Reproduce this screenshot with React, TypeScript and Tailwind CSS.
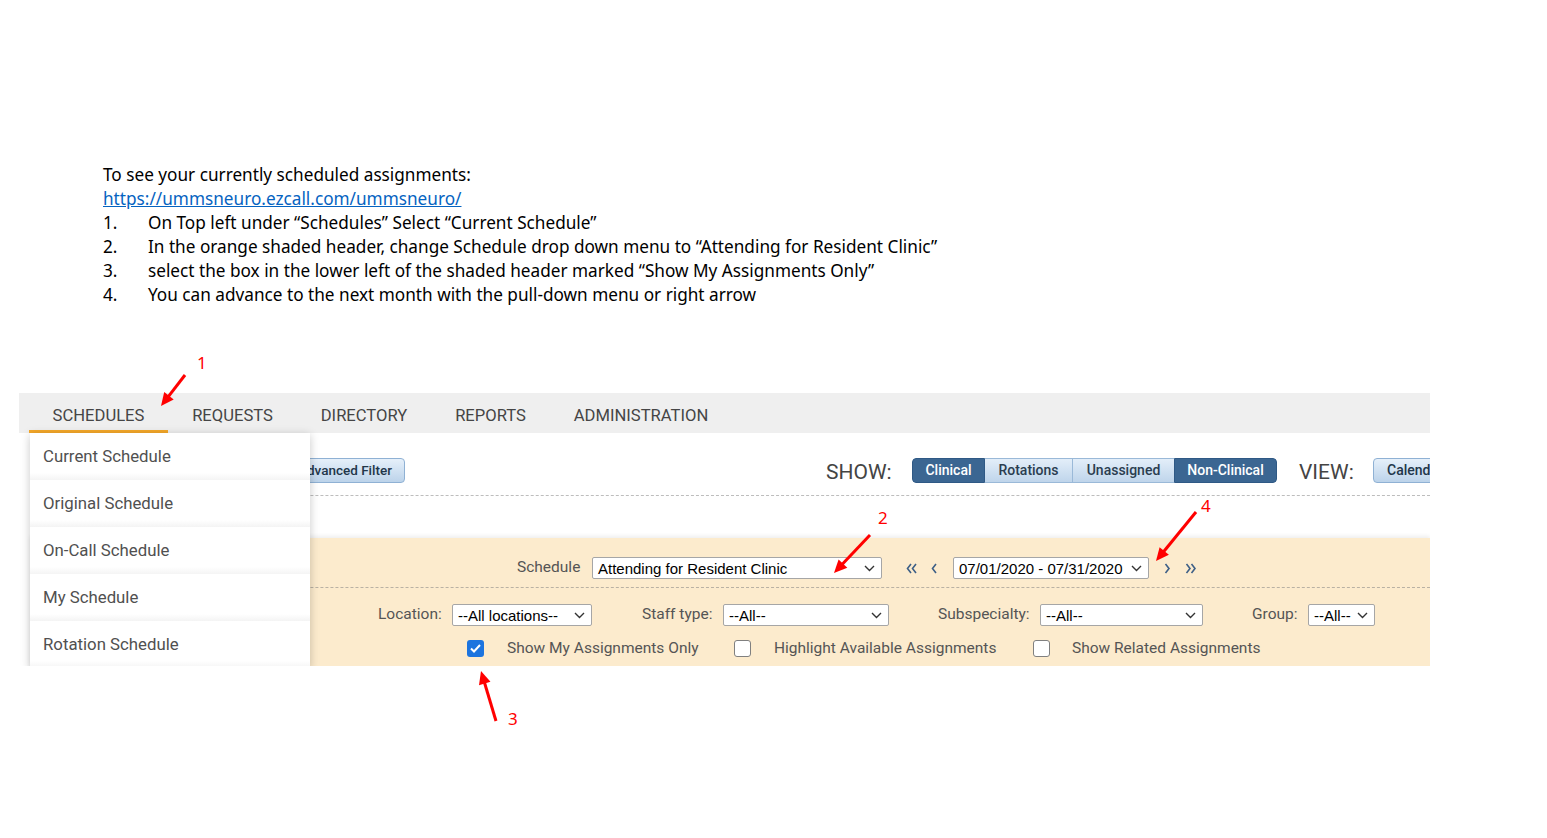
import React from "react";

type Pt = [number, number];

function Arrow({ from, to }: { from: Pt; to: Pt }) {
  const dx = to[0] - from[0];
  const dy = to[1] - from[1];
  const len = Math.hypot(dx, dy);
  const ux = dx / len;
  const uy = dy / len;
  const head = 13;
  const half = 6;
  const bx = to[0] - ux * head;
  const by = to[1] - uy * head;
  const p1 = `${to[0]},${to[1]}`;
  const p2 = `${bx - uy * half},${by + ux * half}`;
  const p3 = `${bx + uy * half},${by - ux * half}`;
  return (
    <g>
      <line x1={from[0]} y1={from[1]} x2={bx + ux * 2} y2={by + uy * 2} stroke="#ff0000" strokeWidth={3} />
      <polygon points={`${p1} ${p2} ${p3}`} fill="#ff0000" />
    </g>
  );
}

function Chevron() {
  return (
    <svg width="11" height="7" viewBox="0 0 11 7">
      <path d="M1 1l4.5 4.5L10 1" fill="none" stroke="#333" strokeWidth="1.4" />
    </svg>
  );
}

// paging chevrons next to the date picker
function Pager({ dir, double = false }: { dir: "l" | "r"; double?: boolean }) {
  const one = dir === "l" ? "M5 1L1.5 5.5L5 10" : "M1.5 1L5 5.5L1.5 10";
  const two = dir === "l" ? "M10 1L6.5 5.5L10 10" : "M6.5 1L10 5.5L6.5 10";
  return (
    <svg width={double ? 11 : 7} height="11" viewBox={`0 0 ${double ? 11 : 7} 11`} className="shrink-0">
      <path d={one} fill="none" stroke="#3d5f86" strokeWidth="1.6" />
      {double && <path d={two} fill="none" stroke="#3d5f86" strokeWidth="1.6" />}
    </svg>
  );
}

function Select({ value, width }: { value: string; width: string }) {
  return (
    <div
      className={`${width} h-[22px] flex items-center justify-between bg-white border border-[#a6a6a6] rounded-[2px] pl-[5px] pr-[6px] font-['Liberation_Sans',Arial,sans-serif] text-[15px] text-black leading-none whitespace-nowrap shrink-0`}
    >
      <span>{value}</span>
      <Chevron />
    </div>
  );
}

function Box({ checked = false }: { checked?: boolean }) {
  return checked ? (
    <div className="w-[17px] h-[17px] rounded-[3px] bg-[#1c74df] flex items-center justify-center shrink-0">
      <svg width="11" height="9" viewBox="0 0 11 9">
        <path d="M1 4.5l3 3L10 1" fill="none" stroke="#fff" strokeWidth="2" />
      </svg>
    </div>
  ) : (
    <div className="w-[17px] h-[17px] rounded-[3px] bg-white border border-[#808080] shrink-0" />
  );
}

const menu = ["Current Schedule", "Original Schedule", "On-Call Schedule", "My Schedule", "Rotation Schedule"];
const tabs: { t: string; w: string }[] = [
  { t: "SCHEDULES", w: "w-[139px]" },
  { t: "REQUESTS", w: "w-[129px]" },
  { t: "DIRECTORY", w: "w-[134px]" },
  { t: "REPORTS", w: "w-[119px]" },
  { t: "ADMINISTRATION", w: "w-[182px]" },
];

export default function App() {
  return (
    <div className="relative w-[1547px] h-[838px] bg-white overflow-hidden">
      {/* instructions */}
      <div className="pt-[163px] pl-[103px] font-['Noto_Sans',sans-serif] text-[17.2px] leading-[24px] text-black">
        <div>To see your currently scheduled assignments:</div>
        <div>
          <span className="text-[#0563c1] underline">https://ummsneuro.ezcall.com/ummsneuro/</span>
        </div>
        {[
          "On Top left under “Schedules” Select “Current Schedule”",
          "In the orange shaded header, change Schedule drop down menu to “Attending for Resident Clinic”",
          "select the box in the lower left of the shaded header marked “Show My Assignments Only”",
          "You can advance to the next month with the pull-down menu or right arrow",
        ].map((t, i) => (
          <div key={i} className="flex">
            <span className="w-[45px] shrink-0">{i + 1}.</span>
            <span>{t}</span>
          </div>
        ))}
      </div>

      {/* app capture */}
      <div className="relative mt-[86px] ml-[19px] w-[1411px] h-[273px] overflow-hidden bg-white font-['Roboto',sans-serif]">
        {/* top nav */}
        <div className="h-[40px] bg-[#efefef] flex pl-[10px]">
          {tabs.map((t, i) => (
            <div
              key={t.t}
              className={`${t.w} shrink-0 flex items-center justify-center pt-[9px] text-[16.6px] text-[#454545] ${
                i === 0 ? "border-b-[3px] border-[#f5a829]" : "border-b-[3px] border-transparent"
              }`}
            >
              {t.t}
            </div>
          ))}
        </div>

        <div className="ml-[11px]">
          {/* toolbar */}
          <div className="h-[63px] border-b border-dashed border-[#bdbdbd] flex items-start pt-[25px]">
            <div className="ml-[252px] w-[123px] h-[25px] pl-[15px] shrink-0 flex items-center rounded-[4px] border border-[#8fb1d4] bg-linear-to-b from-[#e6f0fa] to-[#bcd3ea] text-[13.5px] font-medium text-[#22364a] whitespace-nowrap overflow-hidden">
              Advanced Filter
            </div>
            <div className="ml-[421px] w-[66px] shrink-0 h-[25px] flex items-center text-[21px] text-[#444] leading-none mt-[2px]">SHOW:</div>
            <div className="ml-[20px] flex shrink-0 h-[25px] rounded-[4px] overflow-hidden text-[14px] font-medium">
              <div className="w-[73px] shrink-0 flex items-center justify-center bg-[#3b6692] border border-[#2f5985] text-white rounded-l-[4px]">Clinical</div>
              <div className="w-[88px] shrink-0 flex items-center justify-center bg-linear-to-b from-[#e3eef9] to-[#bfd5eb] border-y border-r border-[#9ab9d8] text-[#2a3d50]">Rotations</div>
              <div className="w-[101px] shrink-0 flex items-center justify-center bg-linear-to-b from-[#e3eef9] to-[#bfd5eb] border-y border-[#9ab9d8] text-[#2a3d50]">Unassigned</div>
              <div className="w-[103px] shrink-0 flex items-center justify-center bg-[#3b6692] border border-[#2f5985] text-white rounded-r-[4px]">Non-Clinical</div>
            </div>
            <div className="ml-[22px] w-[55px] shrink-0 h-[25px] flex items-center text-[21px] text-[#444] leading-none mt-[2px]">VIEW:</div>
            <div className="ml-[19px] h-[25px] w-[100px] shrink-0 pl-[13px] flex items-center rounded-[4px] border border-[#8fb1d4] bg-linear-to-b from-[#e6f0fa] to-[#bcd3ea] text-[14px] font-medium text-[#22364a]">
              Calendar
            </div>
          </div>

          {/* white spacer */}
          <div className="h-[42px]" />

          {/* orange filter panel */}
          <div className="bg-[#fcebcd] shadow-[0_-2px_4px_rgba(0,0,0,0.07)] border-b-[3px] border-[#ececec]">
            <div className="h-[50px] border-b border-dashed border-[#b9b1a3] flex items-start pt-[19px] text-[15.5px] text-[#555]">
              <div className="ml-[487px] w-[63px] shrink-0 h-[22px] flex items-center whitespace-nowrap">Schedule</div>
              <div className="ml-[12px] shrink-0">
                <Select value="Attending for Resident Clinic" width="w-[290px]" />
              </div>
              <div className="ml-[24px] h-[22px] flex items-center">
                <Pager dir="l" double />
              </div>
              <div className="ml-[14px] h-[22px] flex items-center">
                <Pager dir="l" />
              </div>
              <div className="ml-[15px] shrink-0">
                <Select value="07/01/2020 - 07/31/2020" width="w-[196px]" />
              </div>
              <div className="ml-[15px] h-[22px] flex items-center">
                <Pager dir="r" />
              </div>
              <div className="ml-[14px] h-[22px] flex items-center">
                <Pager dir="r" double />
              </div>
            </div>

            <div className="flex items-start pt-[16px] text-[15.5px] text-[#555]">
              <div className="ml-[348px] w-[63px] shrink-0 h-[22px] flex items-center whitespace-nowrap">Location:</div>
              <div className="ml-[11px] shrink-0">
                <Select value="--All locations--" width="w-[140px]" />
              </div>
              <div className="ml-[50px] w-[70px] shrink-0 h-[22px] flex items-center whitespace-nowrap">Staff type:</div>
              <div className="ml-[11px] shrink-0">
                <Select value="--All--" width="w-[166px]" />
              </div>
              <div className="ml-[49px] w-[92px] shrink-0 h-[22px] flex items-center whitespace-nowrap">Subspecialty:</div>
              <div className="ml-[10px] shrink-0">
                <Select value="--All--" width="w-[163px]" />
              </div>
              <div className="ml-[49px] w-[45px] shrink-0 h-[22px] flex items-center whitespace-nowrap">Group:</div>
              <div className="ml-[11px] shrink-0">
                <Select value="--All--" width="w-[67px]" />
              </div>
            </div>

            <div className="h-[47px] flex items-start pt-[13px] text-[15.5px] text-[#555]">
              <div className="ml-[437px] h-[19px] flex items-center shrink-0">
                <Box checked />
              </div>
              <div className="ml-[23px] w-[204px] shrink-0 h-[19px] flex items-center whitespace-nowrap">Show My Assignments Only</div>
              <div className="ml-[23px] h-[19px] flex items-center shrink-0">
                <Box />
              </div>
              <div className="ml-[23px] w-[243px] shrink-0 h-[19px] flex items-center whitespace-nowrap">Highlight Available Assignments</div>
              <div className="ml-[16px] h-[19px] flex items-center shrink-0">
                <Box />
              </div>
              <div className="ml-[22px] h-[19px] flex items-center whitespace-nowrap">Show Related Assignments</div>
            </div>
          </div>
        </div>

        {/* open SCHEDULES menu */}
        <div className="absolute left-[11px] top-[40px] w-[280px] bg-white shadow-[0_2px_9px_rgba(0,0,0,0.22)]">
          {menu.map((m) => (
            <div
              key={m}
              className="h-[47px] flex items-center pl-[13px] pt-[1px] text-[16.8px] text-[#505050] bg-linear-to-b from-white from-85% to-[#f4f4f4]"
            >
              {m}
            </div>
          ))}
        </div>
      </div>

      {/* callouts */}
      <svg className="absolute left-0 top-0 pointer-events-none" width="1547" height="838">
        <Arrow from={[185, 375]} to={[161, 406]} />
        <Arrow from={[870, 535]} to={[834, 573]} />
        <Arrow from={[496, 721]} to={[481, 671]} />
        <Arrow from={[1196, 512]} to={[1156, 561]} />
      </svg>
      <span className="absolute left-[197px] top-[353px] text-[17px] leading-[20px] text-[#ff0000] font-['Noto_Sans',sans-serif]">1</span>
      <span className="absolute left-[878px] top-[508px] text-[17px] leading-[20px] text-[#ff0000] font-['Noto_Sans',sans-serif]">2</span>
      <span className="absolute left-[508px] top-[709px] text-[17px] leading-[20px] text-[#ff0000] font-['Noto_Sans',sans-serif]">3</span>
      <span className="absolute left-[1201px] top-[496px] text-[17px] leading-[20px] text-[#ff0000] font-['Noto_Sans',sans-serif]">4</span>
    </div>
  );
}
